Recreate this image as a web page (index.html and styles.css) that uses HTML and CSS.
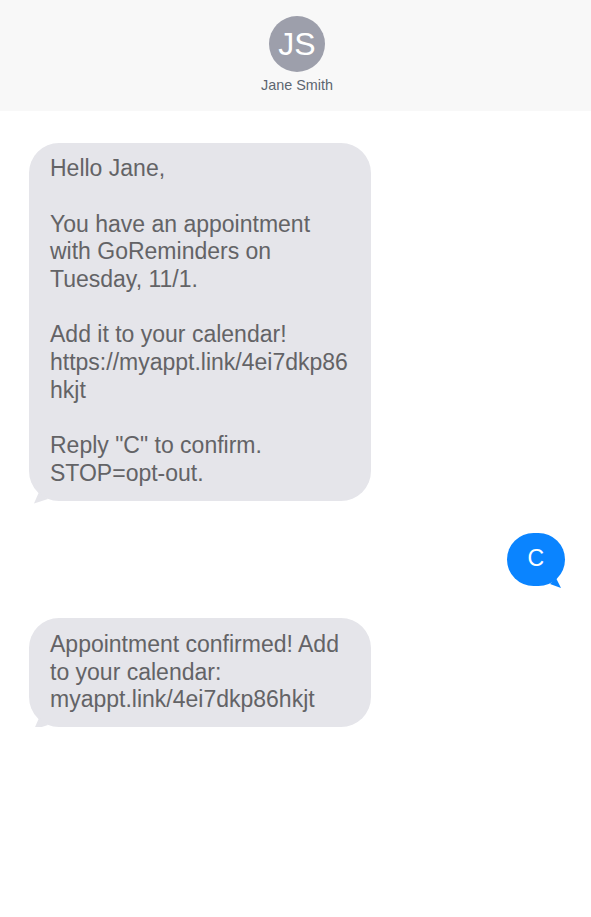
FILE: index.html
```html
<!DOCTYPE html>
<html lang="en">
<head>
    <meta charset="UTF-8">
    <meta name="viewport" content="width=device-width, initial-scale=1.0">
    <title>Messages</title>
    <link rel="stylesheet" href="styles.css">
</head>
<body>
    <div class="contact">
        <div class="avatar">JS</div>
        <div class="contact-name">Jane Smith</div>
    </div>

    <div class="thread">
        <div class="bubble received">
            Hello Jane,<br><br>
            You have an appointment with GoReminders on Tuesday, 11/1.<br><br>
            Add it to your calendar! https://myappt.link/4ei7dkp86hkjt<br><br>
            Reply "C" to confirm. STOP=opt-out.
            <svg class="tail" width="20" height="14" viewBox="0 0 20 14"><path d="M5 0 L0 11.5 L14 7 Z" fill="#e5e5ea"/></svg>
        </div>

        <div class="bubble sent">
            C
            <svg class="tail" width="20" height="14" viewBox="0 0 20 14"><path d="M14 1 L19 11 L8 7 Z" fill="#0a84ff"/></svg>
        </div>

        <div class="bubble received confirmed">
            Appointment confirmed! Add to your calendar: myappt.link/4ei7dkp86hkjt
            <svg class="tail" width="20" height="14" viewBox="0 0 20 14"><path d="M5 0 L0 11.5 L14 7 Z" fill="#e5e5ea"/></svg>
        </div>
    </div>
</body>
</html>
```

FILE: styles.css
```css
body {
    margin: 0;
    background-color: #fff;
    font-family: "Liberation Sans", Arial, sans-serif;
}

.contact {
    height: 111px;
    box-sizing: border-box;
    padding: 16px 0 0 3px;
    background-color: #f8f8f8;
    display: flex;
    flex-direction: column;
    align-items: center;
}

.avatar {
    width: 56px;
    height: 56px;
    border-radius: 50%;
    background-color: #9d9fab;
    color: #fff;
    font-size: 32px;
    display: flex;
    align-items: center;
    justify-content: center;
}

.contact-name {
    margin-top: 5px;
    font-size: 14.4px;
    line-height: 16px;
    color: #5c6670;
}

.thread {
    display: flex;
    flex-direction: column;
    gap: 32px;
    padding: 32px 26px 0 29px;
}

.bubble {
    position: relative;
    box-sizing: border-box;
    max-width: 342px;
    padding: 12.2px 21px 13px;
    border-radius: 30px;
    font-size: 23px;
    line-height: 27.7px;
    overflow-wrap: break-word;
}

.received {
    align-self: flex-start;
    width: 342px;
    background-color: #e5e5ea;
    color: #636366;
}

.confirmed {
    padding-top: 12.6px;
    padding-bottom: 12.6px;
}

.sent {
    align-self: flex-end;
    padding: 12.2px 20.9px 13.7px 20.1px;
    background-color: #0a84ff;
    color: #fff;
}

.tail {
    position: absolute;
    bottom: -5px;
}

.received .tail {
    left: 5px;
}

.sent .tail {
    right: 3px;
}
```
